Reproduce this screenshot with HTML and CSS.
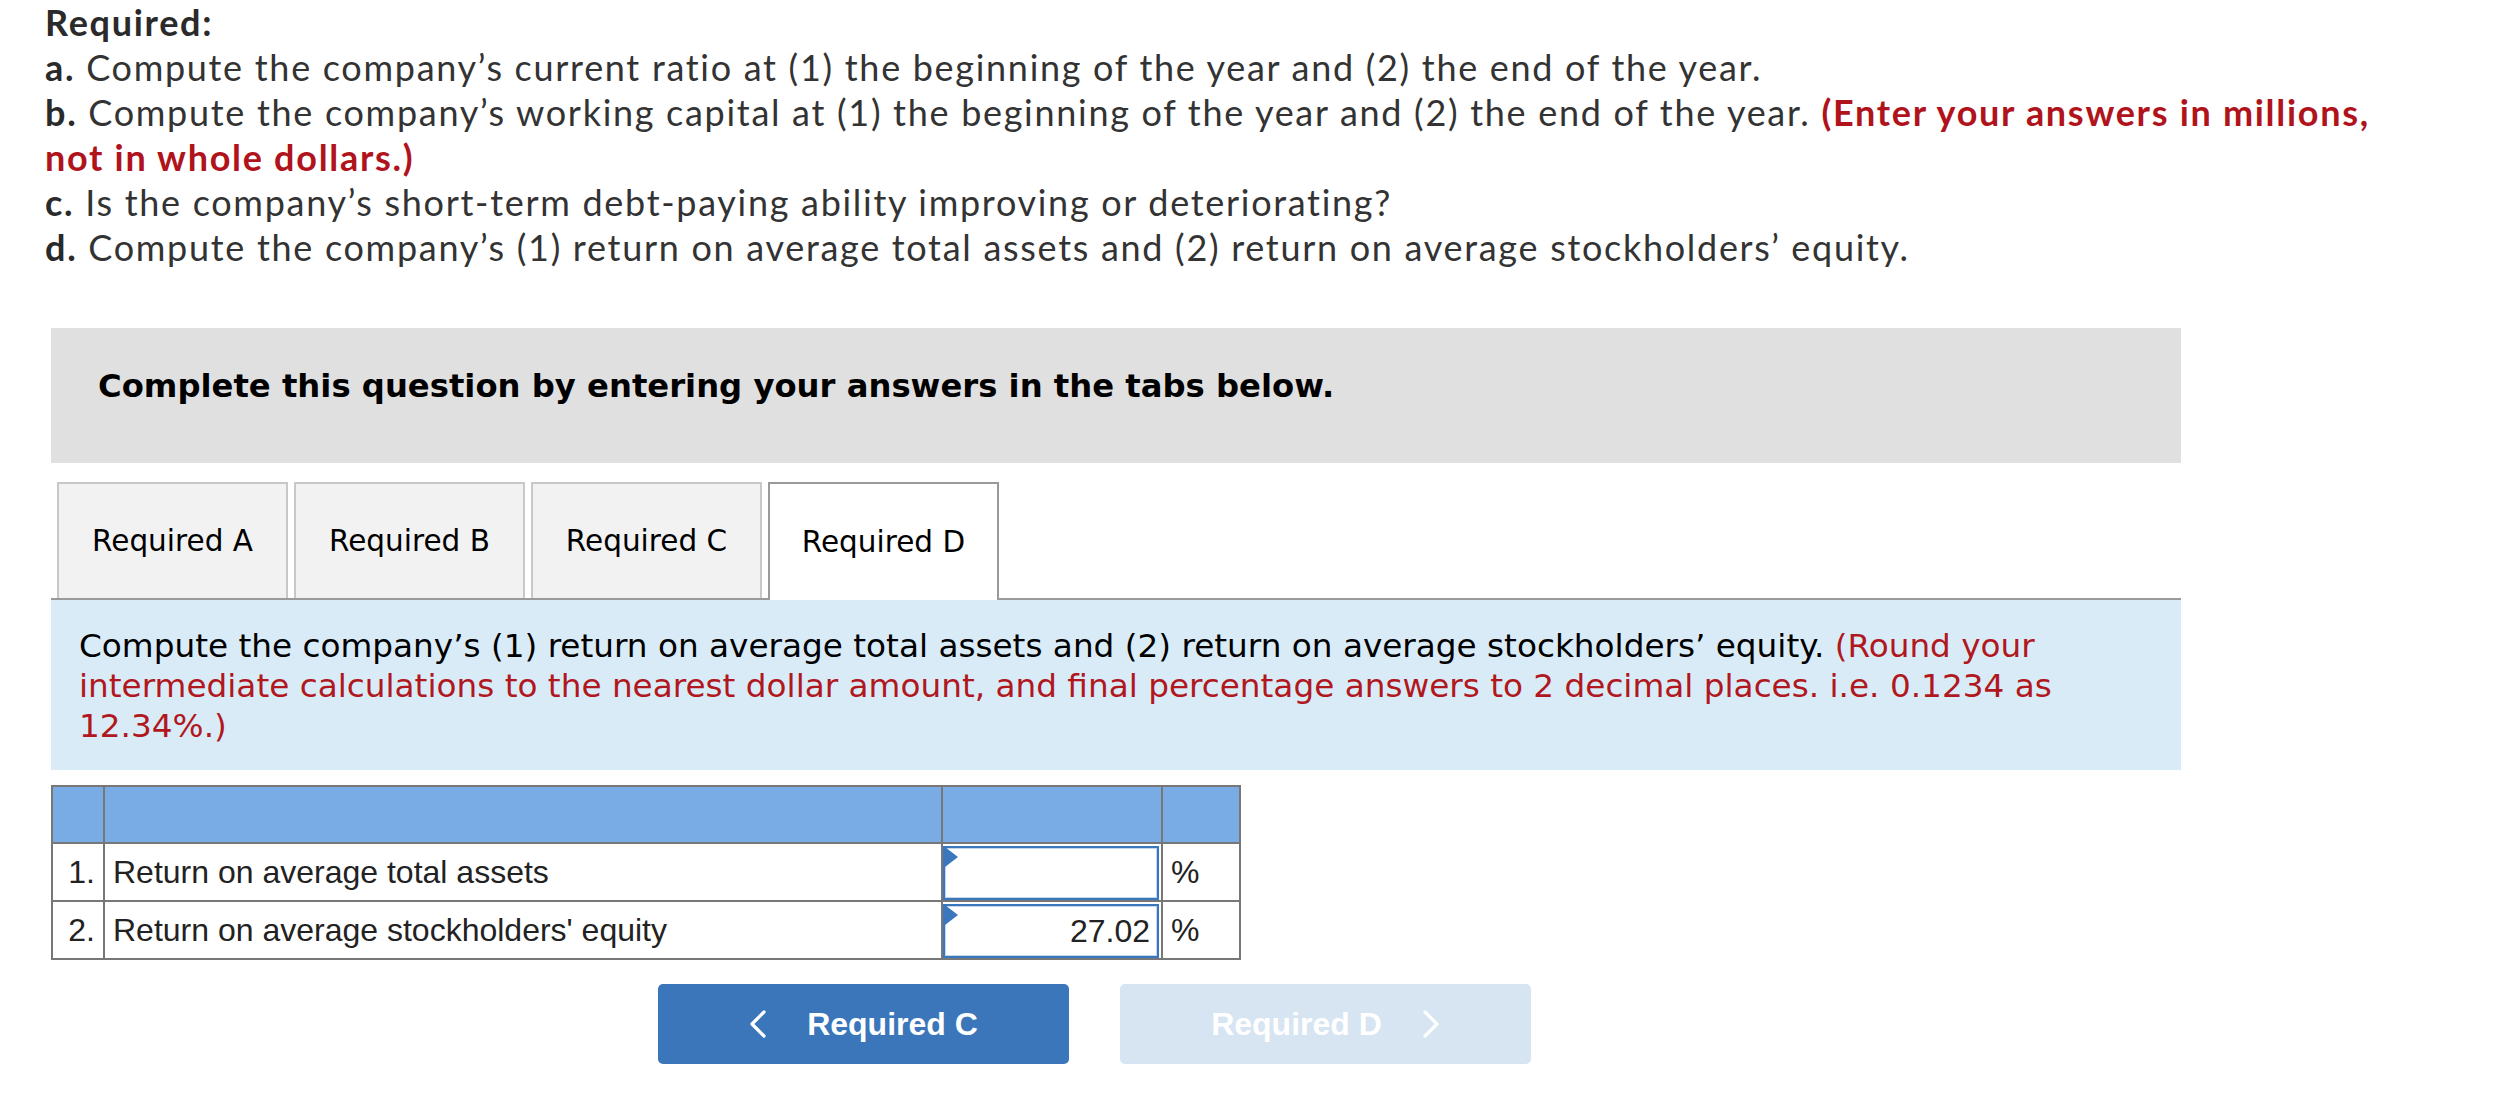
FILE: index.html
```html
<!DOCTYPE html>
<html lang="en">
<head>
<meta charset="utf-8">
<title>Required D</title>
<link rel="stylesheet" href="styles.css">
</head>
<body>
<div class="page">
  <div class="required">
    <p class="req-title">Required:</p>
    <p><b>a.</b> Compute the company’s current ratio at (1) the beginning of the year and (2) the end of the year.</p>
    <p><b>b.</b> Compute the company’s working capital at (1) the beginning of the year and (2) the end of the year. <b class="warn">(Enter your answers in millions,<br>not in whole dollars.)</b></p>
    <p><b>c.</b> Is the company’s short-term debt-paying ability improving or deteriorating?</p>
    <p><b>d.</b> Compute the company’s (1) return on average total assets and (2) return on average stockholders’ equity.</p>
  </div>

  <div class="panel">
    <div class="banner">Complete this question by entering your answers in the tabs below.</div>

    <div class="tabs">
      <div class="tab">Required A</div>
      <div class="tab">Required B</div>
      <div class="tab">Required C</div>
      <div class="tab active">Required D</div>
    </div>

    <div class="instructions">
      Compute the company’s (1) return on average total assets and (2) return on average stockholders’ equity. <span class="hint">(Round your intermediate calculations to the nearest dollar amount, and final percentage answers to 2 decimal places. i.e. 0.1234 as 12.34%.)</span>
    </div>

    <table class="grid">
      <colgroup>
        <col class="c-num">
        <col class="c-label">
        <col class="c-input">
        <col class="c-unit">
      </colgroup>
      <tr class="head">
        <td></td><td></td><td></td><td></td>
      </tr>
      <tr>
        <td class="num">1.</td>
        <td class="label">Return on average total assets</td>
        <td class="cell-input"><span class="flag"></span><input class="answer" type="text" value=""></td>
        <td class="unit">%</td>
      </tr>
      <tr>
        <td class="num">2.</td>
        <td class="label">Return on average stockholders' equity</td>
        <td class="cell-input"><span class="flag"></span><input class="answer" type="text" value="27.02"></td>
        <td class="unit">%</td>
      </tr>
    </table>

    <div class="nav">
      <button class="btn">
        <svg class="chev" width="18" height="28" viewBox="0 0 18 28"><polyline points="15,2 3,14 15,26" fill="none" stroke="#fff" stroke-width="3.2" stroke-linecap="round" stroke-linejoin="round"/></svg>
        <span>Required C</span>
      </button>
      <button class="btn disabled">
        <span>Required D</span>
        <svg class="chev" width="18" height="28" viewBox="0 0 18 28"><polyline points="3,2 15,14 3,26" fill="none" stroke="#fff" stroke-width="3.2" stroke-linecap="round" stroke-linejoin="round"/></svg>
      </button>
    </div>
  </div>
</div>
</body>
</html>
```
FILE: styles.css
```css
* { box-sizing: border-box; }

body {
  margin: 0;
  background: #ffffff;
}

.page {
  width: 2520px;
  padding: 0 0 0 45px;
}

/* Top "Required" block */
.required {
  font-family: Lato, "Open Sans", sans-serif;
  font-size: 36px;
  line-height: 45px;
  letter-spacing: 1.7px;
  color: #333333;
}
.required p { margin: 0; }
.required b { font-weight: 700; color: #2a2a2a; }
.required .warn { color: #b0131b; }
.req-title { font-weight: 700; color: #2a2a2a; }

/* Question panel */
.panel {
  width: 2130px;
  margin: 58px 0 0 6px;
}

.banner {
  height: 135px;
  padding: 38px 0 0 47px;
  background: #e0e0e0;
  font-family: "DejaVu Sans", Verdana, sans-serif;
  font-weight: 700;
  font-size: 32.25px;
  line-height: 40px;
  color: #000;
}

.tabs {
  display: flex;
  gap: 6px;
  margin-top: 19px;
  padding: 0 6px;
  border-bottom: 2px solid #9a9a9a;
}

.tab {
  width: 231px;
  height: 116px;
  display: flex;
  align-items: center;
  justify-content: center;
  background: #f2f2f2;
  border: 2px solid #c8c8c8;
  border-bottom: none;
  font-family: "DejaVu Sans", Verdana, sans-serif;
  font-size: 29.5px;
  color: #000;
}
.tab.active {
  height: 118px;
  margin-bottom: -2px;
  background: #ffffff;
  border-color: #9a9a9a;
}

.instructions {
  height: 170px;
  padding: 26px 28px 0 28px;
  background: #daebf8;
  font-family: "DejaVu Sans", Verdana, sans-serif;
  font-size: 32.7px;
  line-height: 40px;
  color: #000;
}
.instructions .hint { color: #b0181d; }

/* Answer grid */
.grid {
  margin-top: 15px;
  width: 1190px;
  table-layout: fixed;
  border-collapse: separate;
  border-spacing: 0;
  border-top: 2px solid #777777;
  border-left: 2px solid #777777;
  font-family: "Liberation Sans", Arial, sans-serif;
  font-size: 32px;
  color: #222;
}
.c-num { width: 52px; }
.c-label { width: 838px; }
.c-input { width: 220px; }
.c-unit { width: 78px; }

.grid td {
  height: 57px;
  padding: 0;
  border-right: 2px solid #777777;
  border-bottom: 2px solid #777777;
  vertical-align: middle;
}
.grid tr.head td {
  background: #79ace4;
}
.grid td.num {
  text-align: right;
  padding-right: 8px;
}
.grid td.label {
  padding-left: 8px;
}
.grid td.unit {
  padding-left: 8px;
}
.grid td.cell-input {
  position: relative;
  padding: 2px 2px 0 0;
}
.answer {
  display: block;
  width: 100%;
  height: 54px;
  margin: 0;
  padding: 0 7px 0 4px;
  border: 2px solid #3b77bd;
  box-shadow: inset 0 0 0 1px #c2d7ee;
  outline: none;
  background: #fff;
  font-family: "Liberation Sans", Arial, sans-serif;
  font-size: 32px;
  color: #222;
  text-align: right;
}
.flag {
  position: absolute;
  left: 2px;
  top: 3px;
  width: 0;
  height: 0;
  border-left: 13px solid #3b77bd;
  border-top: 10px solid transparent;
  border-bottom: 10px solid transparent;
}

/* Navigation */
.nav {
  display: flex;
  gap: 51px;
  margin-top: 24px;
  padding-left: 607px;
}
.btn {
  width: 411px;
  height: 80px;
  display: flex;
  align-items: center;
  justify-content: center;
  gap: 40px;
  border: none;
  border-radius: 5px;
  background: #3a76b9;
  color: #ffffff;
  font-family: "Liberation Sans", Arial, sans-serif;
  font-weight: 700;
  font-size: 32px;
  padding: 0;
}
.btn.disabled {
  background: #d7e4f2;
}
.chev { display: block; }
```
